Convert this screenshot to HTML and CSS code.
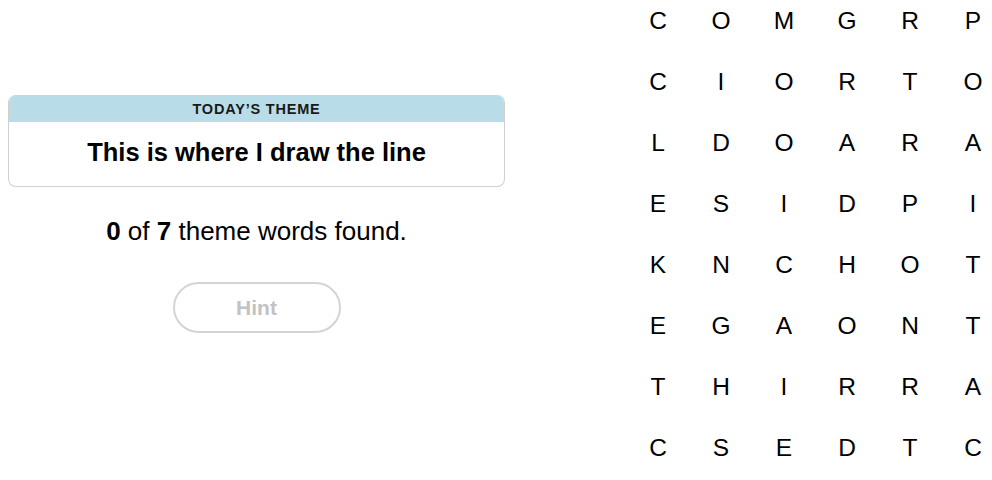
FILE: index.html
```html
<!DOCTYPE html>
<html lang="en">
<head>
<meta charset="utf-8">
<title>Strands</title>
<link rel="stylesheet" href="styles.css">
</head>
<body>
<div class="page">
  <section class="left">
    <div class="theme-card">
      <div class="theme-label">TODAY’S THEME</div>
      <div class="theme-title">This is where I draw the line</div>
    </div>
    <p class="found"><b>0</b> of <b>7</b> theme words found.</p>
    <button class="hint" type="button">Hint</button>
  </section>
  <section class="board">
    <span>C</span><span>O</span><span>M</span><span>G</span><span>R</span><span>P</span>
    <span>C</span><span>I</span><span>O</span><span>R</span><span>T</span><span>O</span>
    <span>L</span><span>D</span><span>O</span><span>A</span><span>R</span><span>A</span>
    <span>E</span><span>S</span><span>I</span><span>D</span><span>P</span><span>I</span>
    <span>K</span><span>N</span><span>C</span><span>H</span><span>O</span><span>T</span>
    <span>E</span><span>G</span><span>A</span><span>O</span><span>N</span><span>T</span>
    <span>T</span><span>H</span><span>I</span><span>R</span><span>R</span><span>A</span>
    <span>C</span><span>S</span><span>E</span><span>D</span><span>T</span><span>C</span>
  </section>
</div>
</body>
</html>
```
FILE: styles.css
```css
html, body {
  margin: 0;
  padding: 0;
  background: #ffffff;
  overflow: hidden;
}
body {
  font-family: "Liberation Sans", Arial, sans-serif;
  color: #000000;
}
.page {
  display: flex;
  align-items: flex-start;
  padding-left: 8px;
  gap: 135px;
}
.left {
  width: 497px;
  display: flex;
  flex-direction: column;
  align-items: center;
  padding-top: 95px;
}
.theme-card {
  width: 100%;
  box-sizing: border-box;
  border: 1px solid #cfcfcf;
  border-top: none;
  border-radius: 8px;
  overflow: hidden;
}
.theme-label {
  background: #b8dde9;
  height: 27px;
  line-height: 28px;
  text-align: center;
  font-size: 14.5px;
  font-weight: 700;
  letter-spacing: 0.8px;
  color: #1a1a1a;
}
.theme-title {
  height: 64px;
  line-height: 60px;
  text-align: center;
  font-size: 25.5px;
  font-weight: 700;
}
.found {
  margin: 27px 0 0;
  font-size: 26px;
  line-height: 34px;
  text-align: center;
}
.found b {
  font-weight: 700;
}
.hint {
  margin-top: 34px;
  width: 168px;
  height: 51px;
  border: 2px solid #d4d4d4;
  border-radius: 26px;
  background: #ffffff;
  color: #c2c2c2;
  font-family: "Liberation Sans", Arial, sans-serif;
  font-size: 21px;
  font-weight: 700;
  padding: 0;
}
.board {
  display: grid;
  grid-template-columns: repeat(6, 38px);
  grid-template-rows: repeat(8, 42px);
  column-gap: 25px;
  row-gap: 19px;
  margin-left: -1px;
}
.board span {
  display: flex;
  align-items: center;
  justify-content: center;
  font-size: 24.5px;
  line-height: 1;
}
```
